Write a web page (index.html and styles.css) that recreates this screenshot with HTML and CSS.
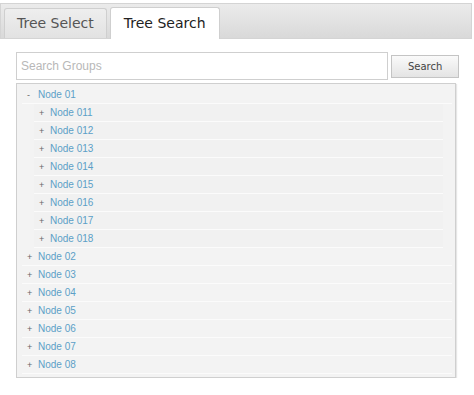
FILE: index.html
```html
<!DOCTYPE html>
<html lang="en">
<head>
    <meta charset="UTF-8">
    <title>Tree Search</title>
    <link rel="stylesheet" href="styles.css">
</head>
<body>

    <!-- Tabs -->
    <div class="tabs">
        <div class="tab">Tree Select</div>
        <div class="tab active">Tree Search</div>
    </div>

    <div class="panel">
        <!-- Search Bar -->
        <div class="search-bar">
            <input type="text" placeholder="Search Groups">
            <button>Search</button>
        </div>

        <!-- Tree -->
        <div class="tree">
            <div class="node open"><span class="toggle">-</span>Node 01</div>
            <div class="children">
                <div class="node"><span class="toggle">+</span>Node 011</div>
                <div class="node"><span class="toggle">+</span>Node 012</div>
                <div class="node"><span class="toggle">+</span>Node 013</div>
                <div class="node"><span class="toggle">+</span>Node 014</div>
                <div class="node"><span class="toggle">+</span>Node 015</div>
                <div class="node"><span class="toggle">+</span>Node 016</div>
                <div class="node"><span class="toggle">+</span>Node 017</div>
                <div class="node"><span class="toggle">+</span>Node 018</div>
            </div>
            <div class="node"><span class="toggle">+</span>Node 02</div>
            <div class="node"><span class="toggle">+</span>Node 03</div>
            <div class="node"><span class="toggle">+</span>Node 04</div>
            <div class="node"><span class="toggle">+</span>Node 05</div>
            <div class="node"><span class="toggle">+</span>Node 06</div>
            <div class="node"><span class="toggle">+</span>Node 07</div>
            <div class="node"><span class="toggle">+</span>Node 08</div>
        </div>
    </div>

</body>
</html>
```

FILE: styles.css
```css
/* General Styles */
body {
    margin: 0;
    padding: 3px 2px 0 0;
    background-color: #fff;
    font-family: 'Liberation Sans', Arial, sans-serif;
}

/* Tabs */
.tabs {
    display: flex;
    align-items: flex-end;
    gap: 3px;
    height: 34px;
    padding: 0 0 0 3px;
    border: 1px solid #d4d4d4;
    background: linear-gradient(#ebebeb, #d9d9d9);
}

.tab {
    padding: 0 12px;
    height: 29px;
    line-height: 29px;
    font-family: 'DejaVu Sans', Verdana, sans-serif;
    font-size: 14px;
    color: #555;
    background: linear-gradient(#eeeeee, #e2e2e2);
    border: 1px solid #cfcfcf;
    border-bottom: none;
    border-radius: 3px 3px 0 0;
}

.tab.active {
    padding: 0 13px;
    height: 31px;
    line-height: 31px;
    color: #222;
    background: #fff;
    margin-bottom: -1px;
}

/* Panel */
.panel {
    padding: 13px 0 0 16px;
}

/* Search Bar */
.search-bar {
    display: flex;
    align-items: center;
    width: 443px;
}

.search-bar input {
    box-sizing: border-box;
    width: 373px;
    height: 28px;
    padding: 0 4px;
    border: 1px solid #cfcfcf;
    font-family: 'Liberation Sans', Arial, sans-serif;
    font-size: 12px;
    color: #555;
    outline: none;
}

.search-bar input::placeholder {
    color: #b8b8b8;
}

.search-bar button {
    margin-left: 3px;
    width: 68px;
    height: 23px;
    padding: 0;
    border: 1px solid #c4c4c4;
    background: linear-gradient(#fafafa, #e4e4e4);
    font-family: 'DejaVu Sans', Verdana, sans-serif;
    font-size: 10px;
    color: #444;
}

/* Tree */
.tree {
    box-sizing: border-box;
    width: 440px;
    margin-top: 3px;
    padding: 2px 3px 3px 5px;
    background-color: #f3f3f3;
    border: 1px solid #cfcfcf;
    box-shadow: 1px 1px 1px #e6e6e6;
}

.node {
    height: 17px;
    line-height: 17px;
    padding-left: 5px;
    border-bottom: 1px solid #fbfbfb;
    font-size: 10px;
    color: #5c9fc7;
}

.toggle {
    display: inline-block;
    width: 11px;
    font-size: 9px;
    color: #666;
}

.children {
    margin: 0 9px 0 12px;
}

.children .node {
    background-color: #f1f1f1;
}
```
